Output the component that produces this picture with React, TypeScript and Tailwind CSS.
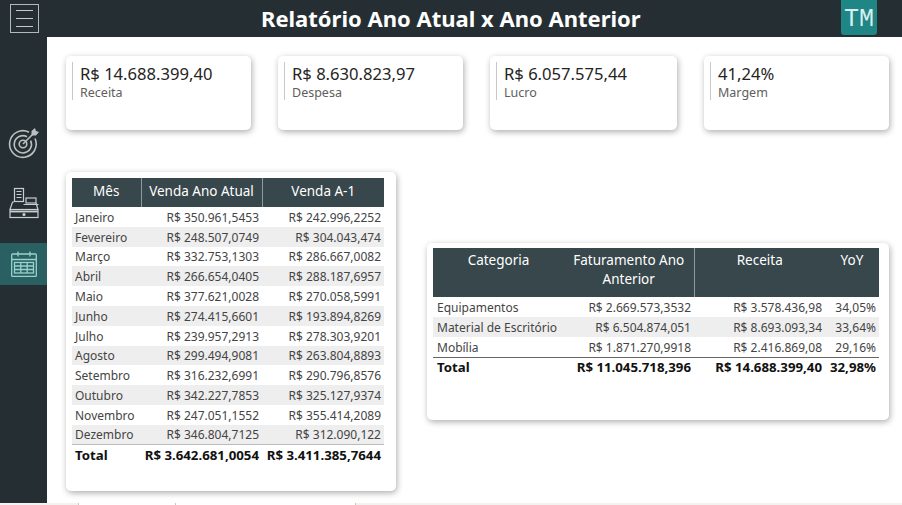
const months = [
  ["Janeiro", "R$ 350.961,5453", "R$ 242.996,2252"],
  ["Fevereiro", "R$ 248.507,0749", "R$ 304.043,474"],
  ["Março", "R$ 332.753,1303", "R$ 286.667,0082"],
  ["Abril", "R$ 266.654,0405", "R$ 288.187,6957"],
  ["Maio", "R$ 377.621,0028", "R$ 270.058,5991"],
  ["Junho", "R$ 274.415,6601", "R$ 193.894,8269"],
  ["Julho", "R$ 239.957,2913", "R$ 278.303,9201"],
  ["Agosto", "R$ 299.494,9081", "R$ 263.804,8893"],
  ["Setembro", "R$ 316.232,6991", "R$ 290.796,8576"],
  ["Outubro", "R$ 342.227,7853", "R$ 325.127,9374"],
  ["Novembro", "R$ 247.051,1552", "R$ 355.414,2089"],
  ["Dezembro", "R$ 346.804,7125", "R$ 312.090,122"],
];

const categories = [
  ["Equipamentos", "R$ 2.669.573,3532", "R$ 3.578.436,98", "34,05%"],
  ["Material de Escritório", "R$ 6.504.874,051", "R$ 8.693.093,34", "33,64%"],
  ["Mobília", "R$ 1.871.270,9918", "R$ 2.416.869,08", "29,16%"],
];

const kpis = [
  { value: "R$ 14.688.399,40", label: "Receita", width: "w-[185px]" },
  { value: "R$ 8.630.823,97", label: "Despesa", width: "w-[185px]" },
  { value: "R$ 6.057.575,44", label: "Lucro", width: "w-[187px]" },
  { value: "41,24%", label: "Margem", width: "w-[185px]" },
];

function TargetIcon() {
  return (
    <svg width="32" height="32" viewBox="0 0 32 32" fill="none" stroke="#b9c0c1" strokeWidth="1.6">
      <path d="M21 5.2A13.3 13.3 0 1 0 27 11.5" />
      <path d="M19 9.8A8.6 8.6 0 1 0 22.6 13.6" />
      <circle cx="15" cy="17" r="3.8" />
      <path d="M15 17 25 7" />
      <path d="M23.5 8.5V4L27 1l1 3 3 1-3 3.5z" fill="#b9c0c1" stroke="none" />
    </svg>
  );
}

function RegisterIcon() {
  return (
    <svg width="32" height="32" viewBox="0 0 32 32" fill="none" stroke="#c9cecf" strokeWidth="1.2">
      <rect x="6.5" y="1.5" width="9" height="13" />
      <path d="M8.5 4.5h5M8.5 7.5h5M8.5 10.5h5" />
      <rect x="18" y="11" width="10" height="5" />
      <path d="M6 15H4.5L2 22.5M15.5 17.5h15M30 22.5 28 16" />
      <rect x="2" y="22.5" width="28" height="8" />
      <path d="M2 24.5h28" strokeWidth="1.8" />
      <circle cx="16" cy="27.5" r="1" fill="#c9cecf" />
    </svg>
  );
}

function CalendarIcon() {
  return (
    <svg width="26" height="26" viewBox="0 0 26 26" fill="none" stroke="#97d2cc" strokeWidth="1.3">
      <rect x="0.7" y="3" width="24.6" height="22.4" rx="1" />
      <path d="M1 8.5h24M7 0.5v5M19 0.5v5" />
      <rect x="3.5" y="11.5" width="19" height="10.5" />
      <path d="M3.5 15h19M3.5 18.5h19M9.8 11.5V22M16.2 11.5V22" />
    </svg>
  );
}

export default function App() {
  return (
    <div className="flex h-[505px] w-[902px] flex-col overflow-hidden bg-white font-['Noto_Sans','Open_Sans',sans-serif]">
      <header className="flex h-[37px] shrink-0 items-start bg-[#252f33]">
        <div className="ml-[10px] mt-[4px] flex h-[29px] w-[29px] flex-col items-center justify-center gap-[7px] border border-[#b4baba]">
          <span className="h-px w-[17px] bg-[#c5caca]" />
          <span className="h-px w-[17px] bg-[#c5caca]" />
          <span className="h-px w-[17px] bg-[#c5caca]" />
        </div>
        <h1 className="ml-[222px] w-[378px] text-center text-[22px] font-bold leading-[36px] whitespace-nowrap text-white">
          Relatório Ano Atual x Ano Anterior
        </h1>
        <div className="ml-[202px] flex h-[35px] w-[36px] items-center justify-center rounded-b-[3px] bg-[#1f8585] pt-[3px] font-['Liberation_Mono',monospace] text-[25px] leading-none text-[#d8eeee]">
          TM
        </div>
      </header>

      <div className="flex min-h-0 flex-1">
        <aside className="flex w-[47px] shrink-0 flex-col items-center bg-[#252f33] pt-[90px]">
          <div className="flex h-[32px] items-center justify-center"><TargetIcon /></div>
          <div className="mt-[28px] flex h-[32px] items-center justify-center"><RegisterIcon /></div>
          <div className="mt-[24px] flex h-[42px] w-full items-center justify-center bg-[#2a6062]"><CalendarIcon /></div>
        </aside>

        <main className="min-w-0 flex-1 pl-[19px] pt-[19px]">
          <div className="flex">
            {kpis.map((kpi, i) => (
              <div
                key={kpi.label}
                className={`${kpi.width} ${i === 0 ? "" : "ml-[27px]"} h-[74px] rounded-[5px] bg-white pl-[6px] pt-[6px] shadow-[1px_2px_6px_rgba(0,0,0,0.32)]`}
              >
                <div className="h-[38px] border-l border-[#c8c8c8] pl-[7px]">
                  <div className="pt-px text-[16.6px] leading-[21px] whitespace-nowrap text-[#252423]">{kpi.value}</div>
                  <div className="text-[12.5px] leading-[18px] text-[#605e5c]">{kpi.label}</div>
                </div>
              </div>
            ))}
          </div>

          <div className="flex items-start">
            <section className="mt-[42px] h-[319px] w-[330px] rounded-[5px] bg-white p-[6px] shadow-[1px_2px_6px_rgba(0,0,0,0.32)]">
              <table className="w-[312px] table-fixed border-collapse text-[12px] leading-[16px] text-[#444444]">
                <colgroup>
                  <col className="w-[69px]" />
                  <col className="w-[121px]" />
                  <col className="w-[122px]" />
                </colgroup>
                <thead>
                  <tr className="h-[29px] bg-[#37474b] text-[13.5px] text-white">
                    <th className="pb-[3px] font-normal">Mês</th>
                    <th className="border-l border-[#8f9a9c] pb-[3px] font-normal whitespace-nowrap">Venda Ano Atual</th>
                    <th className="border-l border-[#8f9a9c] pb-[3px] font-normal">Venda A-1</th>
                  </tr>
                </thead>
                <tbody>
                  {months.map((row, i) => (
                    <tr key={row[0]} className={`h-[19.8px] ${i % 2 === 1 ? "bg-[#eeeeee]" : ""}`}>
                      <td className="pl-[3px] pt-[2px]">{row[0]}</td>
                      <td className="pr-[3px] pt-[2px] text-right">{row[1]}</td>
                      <td className="pr-[3px] pt-[2px] text-right">{row[2]}</td>
                    </tr>
                  ))}
                  <tr className="h-[20px] border-t border-[#bbbbbb] text-[13.25px] font-bold text-[#111111]">
                    <td className="pl-[3px]">Total</td>
                    <td className="pr-[3px] text-right whitespace-nowrap">R$ 3.642.681,0054</td>
                    <td className="pr-[3px] text-right whitespace-nowrap">R$ 3.411.385,7644</td>
                  </tr>
                </tbody>
              </table>
            </section>

            <section className="ml-[31px] mt-[113px] h-[177px] w-[462px] rounded-[5px] bg-white p-[6px] pt-[5px] shadow-[1px_2px_6px_rgba(0,0,0,0.32)]">
              <table className="w-[446px] table-fixed border-collapse text-[12px] leading-[16px] text-[#444444]">
                <colgroup>
                  <col className="w-[131px]" />
                  <col className="w-[130px]" />
                  <col className="w-[131px]" />
                  <col className="w-[54px]" />
                </colgroup>
                <thead>
                  <tr className="h-[49px] bg-[#37474b] text-[13.5px] text-white">
                    <th className="pt-[3px] align-top leading-[19px] font-normal">Categoria</th>
                    <th className="pt-[3px] align-top leading-[19px] font-normal">Faturamento Ano Anterior</th>
                    <th className="border-l border-[#8f9a9c] pt-[3px] align-top leading-[19px] font-normal">Receita</th>
                    <th className="pt-[3px] align-top leading-[19px] font-normal">YoY</th>
                  </tr>
                </thead>
                <tbody>
                  {categories.map((row, i) => (
                    <tr key={row[0]} className={`h-[20px] ${i === 1 ? "bg-[#eeeeee]" : ""}`}>
                      <td className="pl-[4px] pt-[2px] whitespace-nowrap">{row[0]}</td>
                      <td className="pr-[3px] pt-[2px] text-right">{row[1]}</td>
                      <td className="pr-[3px] pt-[2px] text-right">{row[2]}</td>
                      <td className="pr-[3px] pt-[2px] text-right">{row[3]}</td>
                    </tr>
                  ))}
                  <tr className="h-[20px] border-t border-[#666666] text-[13.25px] font-bold text-[#111111]">
                    <td className="pl-[4px]">Total</td>
                    <td className="pr-[3px] text-right whitespace-nowrap">R$ 11.045.718,396</td>
                    <td className="pr-[3px] text-right whitespace-nowrap">R$ 14.688.399,40</td>
                    <td className="pr-[3px] text-right whitespace-nowrap">32,98%</td>
                  </tr>
                </tbody>
              </table>
            </section>
          </div>
        </main>
      </div>

      {/* page tab strip cut off by the bottom of the window */}
      <footer className="flex h-[2px] shrink-0 bg-[#f3f2f1]">
        <div className="w-[78px]" />
        <div className="w-[98px] border-x border-[#c8c6c4] bg-white" />
        <div className="w-[179px] bg-white" />
        <div className="flex-1 border-l border-[#c8c6c4]" />
      </footer>
    </div>
  );
}
